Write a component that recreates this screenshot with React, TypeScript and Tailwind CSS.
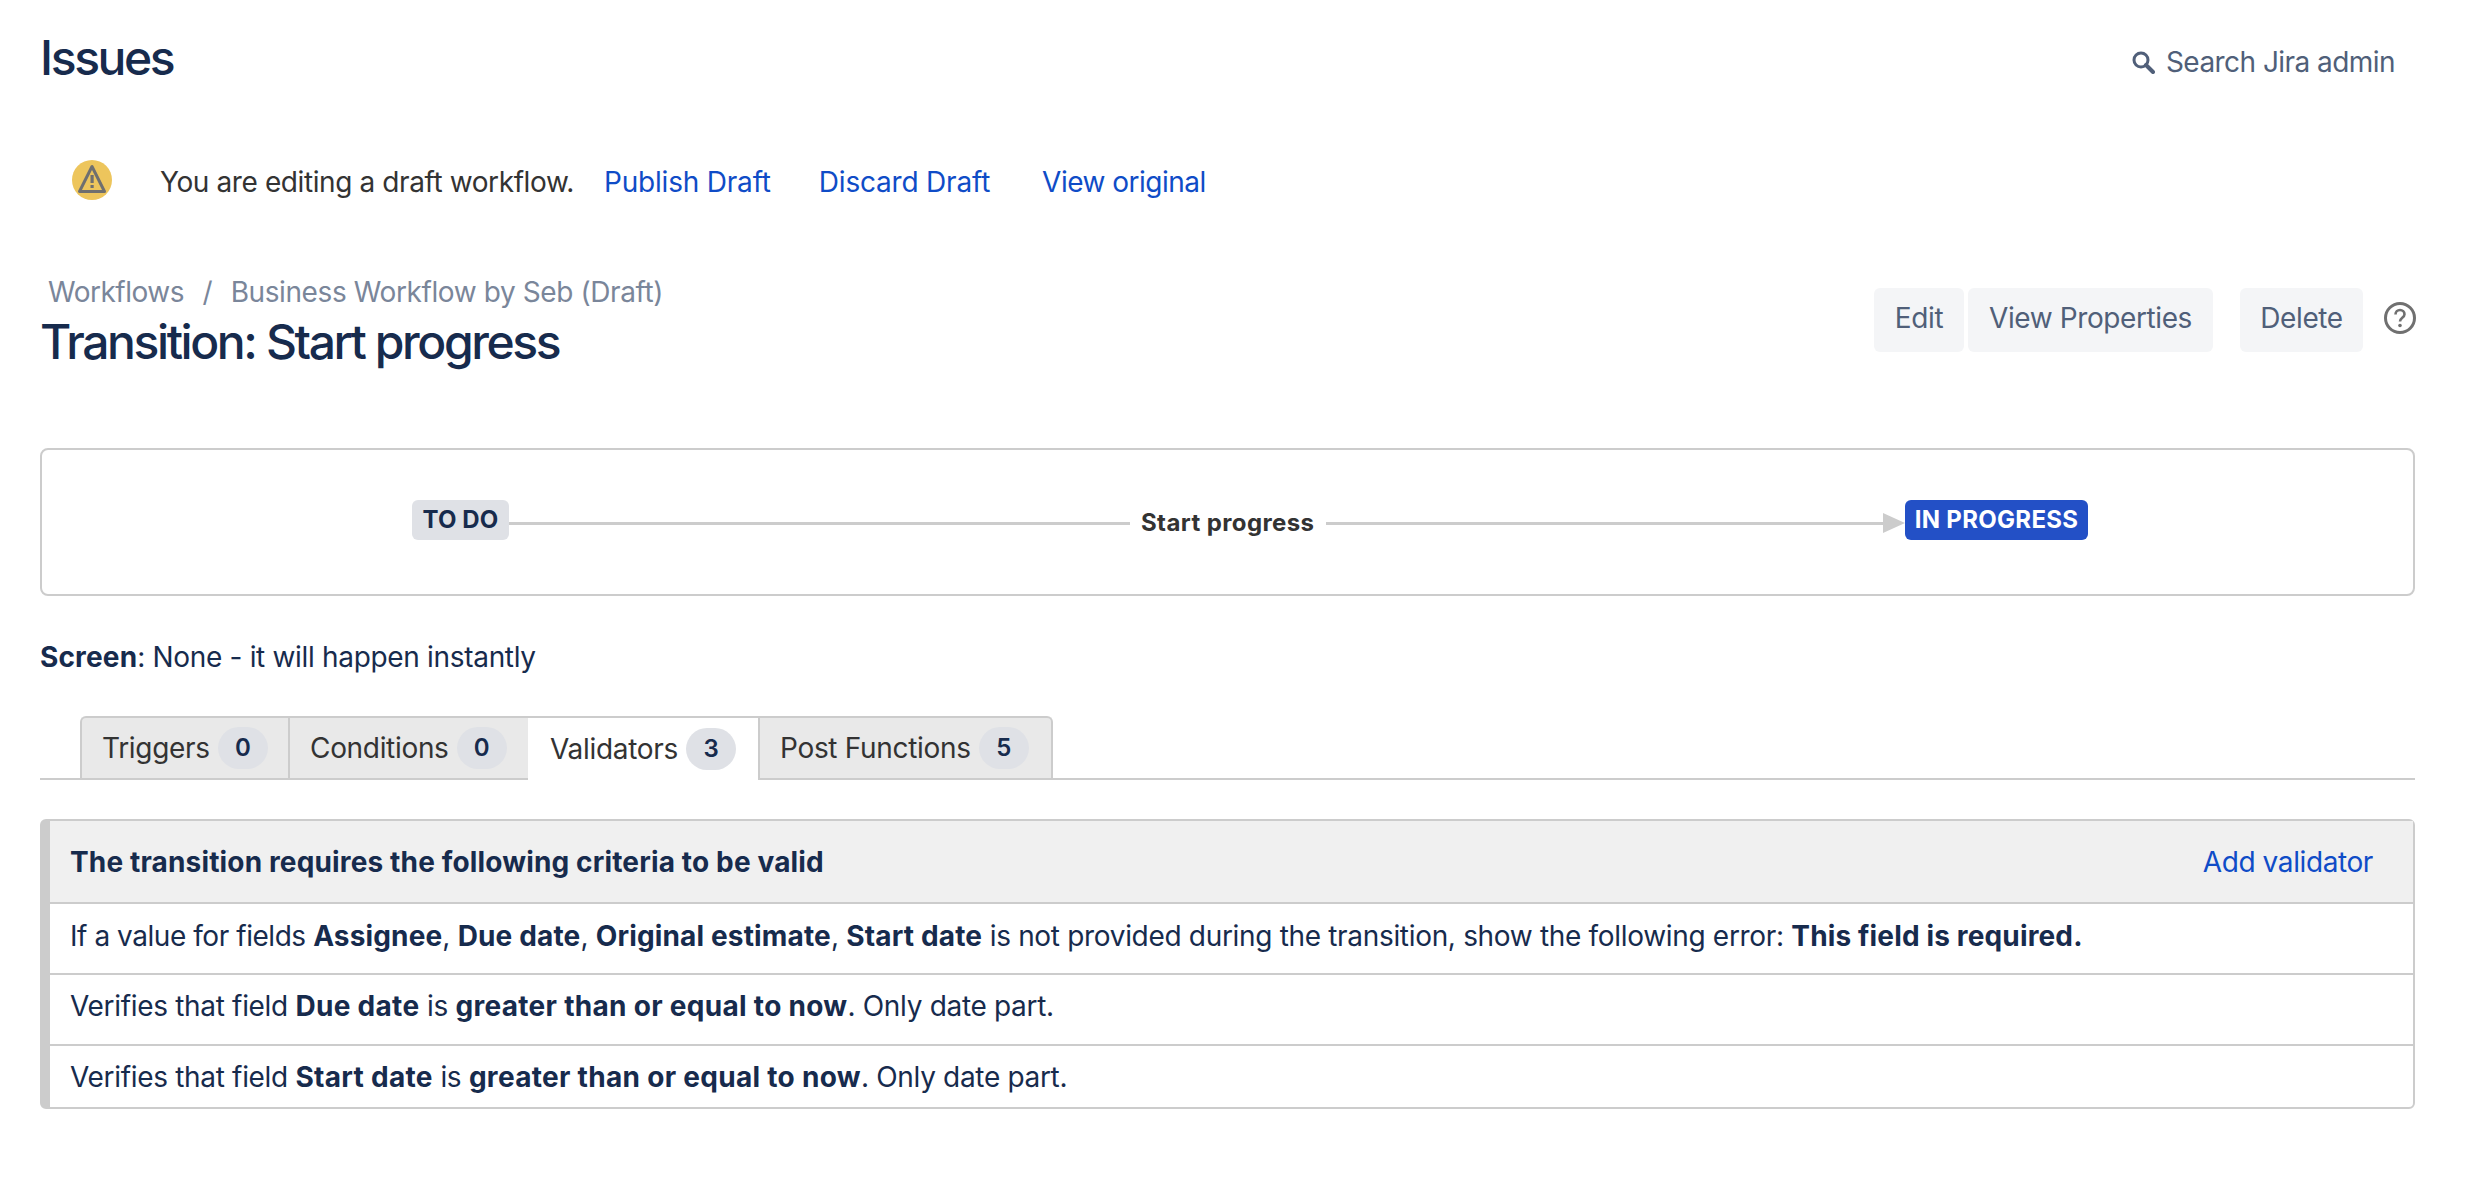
export default function App() {
  return (
    <div className="w-[2470px] h-[1204px] bg-white [font-family:Inter,sans-serif] text-[28px] tracking-[-0.32px] text-[#172b4d] pl-10 pr-[55px] overflow-hidden">
      <header className="h-[116px] flex items-center justify-between">
        <h1 className="text-[48px] leading-[60px] font-medium tracking-[-2.4px] text-[#172b4d]">Issues</h1>
        <div className="flex items-center gap-[11px] mt-2 mr-5 tracking-[-0.55px] text-[#505f79]">
          <svg width="24" height="24" viewBox="0 0 24 24" fill="none" stroke="#505f79">
            <circle cx="10" cy="10" r="7" strokeWidth="3" />
            <path d="M15 15l7 7" strokeWidth="4" strokeLinecap="round" />
          </svg>
          <span>Search Jira admin</span>
        </div>
      </header>

      <div className="h-[132px] flex items-center pl-8 tracking-[-0.4px] text-[#333333]">
        <svg width="40" height="40" viewBox="0 0 40 40" className="shrink-0 -mt-[5px]">
          <circle cx="20" cy="20" r="20" fill="#edc55c" />
          <path d="M20 6.5L7.5 31.5h25L20 6.5z" fill="none" stroke="#6f6f6f" strokeWidth="3" strokeLinejoin="round" />
          <rect x="18.5" y="15" width="3.2" height="8" fill="#6f6f6f" />
          <rect x="18.5" y="25" width="3.2" height="3" fill="#6f6f6f" />
        </svg>
        <span className="ml-12">You are editing a draft workflow.</span>
        <a className="ml-[30px] tracking-[-0.2px] text-[#0f4cc7]">Publish Draft</a>
        <a className="ml-12 tracking-[-0.2px] text-[#0f4cc7]">Discard Draft</a>
        <a className="ml-[52px] tracking-[-0.5px] text-[#0f4cc7]">View original</a>
      </div>

      <div className="flex justify-between items-start mt-[24px]">
        <div>
          <div className="h-10 leading-10 pl-2 tracking-[-0.4px] text-[#7a869a]">
            <span className="tracking-[-0.5px]">Workflows</span>
            <span className="mx-[18.5px]">/</span>
            <span>Business Workflow by Seb (Draft)</span>
          </div>
          <h2 className="text-[48px] leading-[60px] font-medium tracking-[-2.4px]">Transition: Start progress</h2>
        </div>
        <div className="flex items-center mt-4 -mr-px tracking-[-0.4px] text-[#505f79]">
          <a className="h-16 w-[90px] pb-1 flex items-center justify-center rounded-md bg-[#f4f5f7]">Edit</a>
          <a className="h-16 w-[245px] pb-1 ml-1 flex items-center justify-center rounded-md bg-[#f4f5f7]">View Properties</a>
          <a className="h-16 w-[123px] pb-1 ml-[27px] flex items-center justify-center rounded-md bg-[#f4f5f7]">Delete</a>
          <svg width="32" height="32" viewBox="0 0 32 32" fill="none" stroke="#707070" className="ml-[21px] -mt-[4px]">
            <circle cx="16" cy="16" r="14.5" strokeWidth="3" />
            <path d="M11.5 12.5c0-2.7 2-4.5 4.5-4.5s4.5 1.8 4.5 4.2c0 3.6-4.5 3.6-4.5 7.3" strokeWidth="2.6" />
            <circle cx="16" cy="23.5" r="1.8" fill="#707070" stroke="none" />
          </svg>
        </div>
      </div>

      <div className="mt-[76px] h-[148px] border-2 border-[#cccccc] rounded-lg flex items-center pl-[370px] tracking-[0.1px]">
        <span className="w-[97px] h-10 mb-1 shrink-0 flex items-center justify-center rounded-md bg-[#dfe1e6] text-[24px] font-bold">TO DO</span>
        <div className="w-[621px] h-[3px] mt-[2px] bg-[#cccccc]"></div>
        <span className="ml-[11px] mt-[2px] w-[174px] text-[24px] font-bold tracking-[0.4px] whitespace-nowrap text-[#333333]">Start progress</span>
        <div className="ml-[11px] w-[557px] h-[3px] mt-[2px] bg-[#cccccc]"></div>
        <svg width="22" height="20" viewBox="0 0 22 20" className="mt-[2px] shrink-0"><path d="M0 0l22 10L0 20z" fill="#cccccc" /></svg>
        <span className="w-[183px] h-10 mb-1 shrink-0 flex items-center justify-center rounded-md bg-[#2350c6] text-white text-[24px] font-bold tracking-[0.3px]">IN PROGRESS</span>
      </div>

      <p className="mt-[41px] h-10 leading-10"><B>Screen</B>: None - it will happen instantly</p>

      <div className="mt-[39px] h-16 flex pl-10 border-b-2 border-[#cccccc]">
        <Tab w="w-[208px]" label="Triggers" n="0" first />
        <Tab w="w-[240px]" label="Conditions" n="0" />
        <Tab w="w-[230px]" label="Validators" n="3" active />
        <Tab w="w-[295px]" label="Post Functions" n="5" last />
      </div>

      <div className="mt-[39px] border-2 border-l-[10px] border-[#cccccc] rounded-md">
        <div className="h-[81px] flex items-center justify-between pl-5 pr-10 bg-[#f0f0f0]">
          <B>The transition requires the following criteria to be valid</B>
          <a className="tracking-[-0.4px] text-[#0f4cc7]">Add validator</a>
        </div>
        <div className="h-[71px] pb-[6px] flex items-center pl-5 border-t-2 border-[#cccccc]">
          <span><span className="tracking-[-0.45px]">If a value for fields </span><B>Assignee</B>, <B>Due date</B>, <B>Original estimate</B>, <B>Start date</B> is not provided during the transition, show the following error: <B>This field is required.</B></span>
        </div>
        <div className="h-[71px] pb-2 flex items-center pl-5 border-t-2 border-[#cccccc]">
          <span>Verifies that field <strong className="font-bold tracking-[0.3px]">Due date</strong> is <strong className="font-bold tracking-[0.3px]">greater than or equal to now</strong>. Only date part.</span>
        </div>
        <div className="h-[63px] flex items-center pl-5 border-t-2 border-[#cccccc]">
          <span>Verifies that field <strong className="font-bold tracking-[0.3px]">Start date</strong> is <strong className="font-bold tracking-[0.3px]">greater than or equal to now</strong>. Only date part.</span>
        </div>
      </div>
    </div>
  );
}

function B({ children }: { children: React.ReactNode }) {
  return <strong className="font-bold tracking-[0.15px]">{children}</strong>;
}

function Tab({ w, label, n, active, first, last }: { w: string; label: string; n: string; active?: boolean; first?: boolean; last?: boolean }) {
  return (
    <div
      className={
        active
          ? `${w} h-[64px] flex items-center pl-[22px] gap-2 bg-white border-t-2 border-[#cccccc] text-[#333333]`
          : `${w} h-[62px] flex items-center pl-[20px] gap-2 bg-[#e9e9e9] border-t-2 border-l-2 border-[#cccccc] text-[#333333] ${first ? "rounded-tl-md" : ""} ${last ? "rounded-tr-md border-r-2" : ""}`
      }
    >
      <span>{label}</span>
      <span className="w-[50px] h-[42px] shrink-0 flex items-center justify-center rounded-full bg-[#dfe1e6] text-[#172b4d] text-[24px] font-semibold">{n}</span>
    </div>
  );
}
